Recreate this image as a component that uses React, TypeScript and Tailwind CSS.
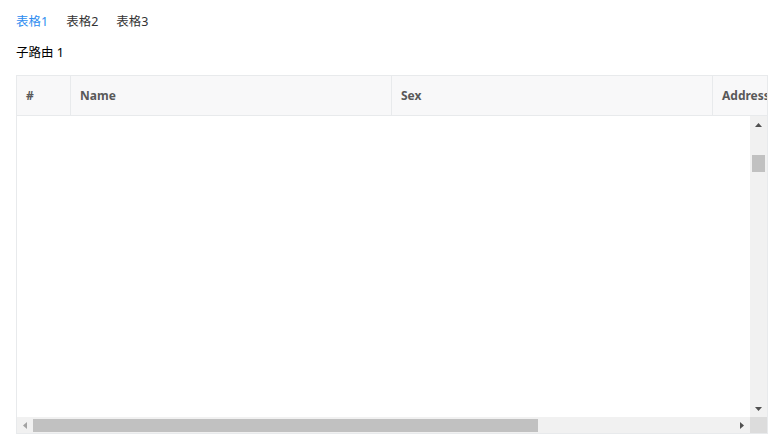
import React from "react";

const font = { fontFamily: '"Noto Sans", "Noto Sans CJK SC", sans-serif' };

function Tri({ dir, color }: { dir: "up" | "down" | "left" | "right"; color: string }) {
  const pts: Record<string, string> = {
    up: "0,4 7,4 3.5,0",
    down: "0,0 7,0 3.5,4",
    left: "4,0 4,7 0,3.5",
    right: "0,0 0,7 4,3.5",
  };
  const w = dir === "up" || dir === "down" ? 7 : 4;
  const h = dir === "up" || dir === "down" ? 4 : 7;
  return (
    <svg width={w} height={h} viewBox={`0 0 ${w} ${h}`}>
      <polygon points={pts[dir]} fill={color} />
    </svg>
  );
}

export default function App() {
  return (
    <div className="min-h-[443px] bg-white pl-4 pt-[14px]" style={font}>
      <div className="flex gap-[18px] text-[12.5px] leading-[16px] text-[#333]">
        <span className="text-[#2d8cf0]">表格1</span>
        <span>表格2</span>
        <span>表格3</span>
      </div>
      <div className="mt-[15px] text-[12.5px] leading-[16px] text-black">子路由 1</div>
      <div className="mt-[14px] flex h-[359px] w-[752px] flex-col border border-[#e8eaec]">
        <div className="flex h-[40px] shrink-0 overflow-hidden border-b border-[#e8eaec] bg-[#f8f8f9] text-[12px] font-bold text-[#595959]">
          <div className="flex w-[54px] shrink-0 items-center border-r border-[#e8eaec] pl-[9px]">#</div>
          <div className="flex w-[321px] shrink-0 items-center border-r border-[#e8eaec] pl-[9px]">Name</div>
          <div className="flex w-[321px] shrink-0 items-center border-r border-[#e8eaec] pl-[9px]">Sex</div>
          <div className="flex w-[120px] shrink-0 items-center pl-[9px]">Address</div>
        </div>
        <div className="flex h-[301px] shrink-0">
          <div className="flex-1 bg-white" />
          <div className="flex w-[17px] flex-col bg-[#f1f1f1]">
            <div className="flex h-[17px] items-center justify-center">
              <Tri dir="up" color="#505050" />
            </div>
            <div className="mt-[22px] ml-[2px] h-[17px] w-[13px] bg-[#c1c1c1]" />
            <div className="flex-1" />
            <div className="flex h-[17px] items-center justify-center">
              <Tri dir="down" color="#505050" />
            </div>
          </div>
        </div>
        <div className="flex h-[16px] shrink-0 bg-[#f1f1f1]">
          <div className="flex w-[16px] items-center justify-center">
            <Tri dir="left" color="#a3a3a3" />
          </div>
          <div className="mt-[2px] h-[13px] w-[505px] bg-[#c1c1c1]" />
          <div className="flex-1" />
          <div className="flex w-[16px] items-center justify-center">
            <Tri dir="right" color="#505050" />
          </div>
          <div className="w-[17px] bg-[#dcdcdc]" />
        </div>
      </div>
    </div>
  );
}
